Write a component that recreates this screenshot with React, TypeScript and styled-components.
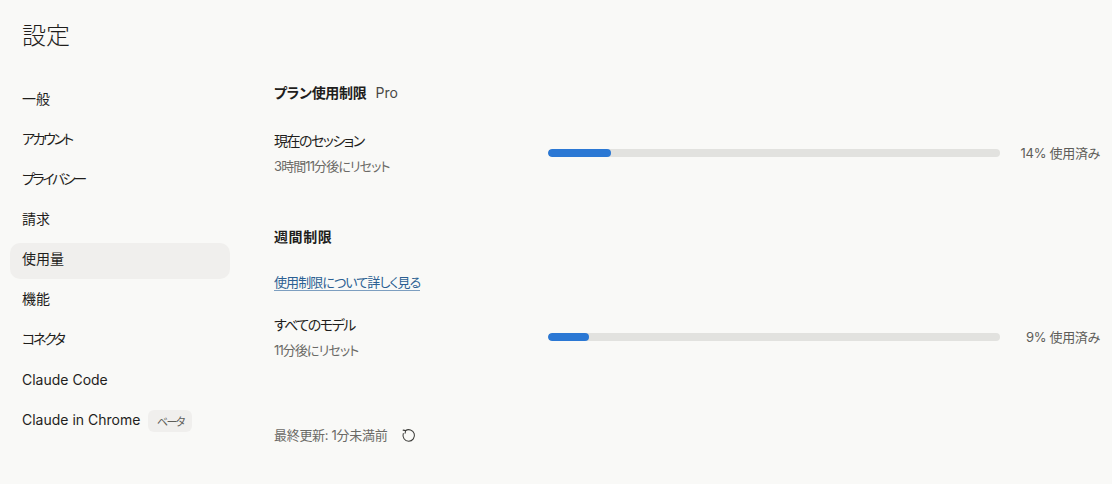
import { createGlobalStyle } from "styled-components";
import styled from "styled-components";

const fontStack = `Inter, "Noto Sans CJK JP", sans-serif`;

const navItems = [
    { label: "一般" },
    { label: "アカウント", kana: true },
    { label: "プライバシー", kana: true },
    { label: "請求" },
    { label: "使用量", active: true },
    { label: "機能" },
    { label: "コネクタ", kana: true },
];

const GlobalStyle = createGlobalStyle`
html, body {
  margin: 0;
  padding: 0;
  background: #f9f9f7;
}
body {
  font-family: ${fontStack};
  font-feature-settings: "palt";
  color: #1f1e1c;
}
`;

export default function App() {
    return (
        <Page>
            <GlobalStyle />
            <Title>設定</Title>
            <Columns>
                <Sidebar>
                    {navItems.map((item) => (
                        <NavItem key={item.label} $active={item.active} $kana={item.kana}>
                            {item.label}
                        </NavItem>
                    ))}
                    <NavItem $latin>Claude Code</NavItem>
                    <NavItem $latin>
                        Claude in Chrome
                        <Badge>ベータ</Badge>
                    </NavItem>
                </Sidebar>
                <Main>
                    <Heading>
                        プラン使用制限
                        <Plan>Pro</Plan>
                    </Heading>
                    <UsageRow $top={27}>
                        <UsageInfo>
                            <UsageName>現在のセッション</UsageName>
                            <UsageReset>3時間11分後にリセット</UsageReset>
                        </UsageInfo>
                        <Track>
                            <Fill style={{ width: "14%" }} />
                        </Track>
                        <UsageValue>14% 使用済み</UsageValue>
                    </UsageRow>
                    <WeeklyHeading>週間制限</WeeklyHeading>
                    <LearnMore href="#">使用制限について詳しく見る</LearnMore>
                    <UsageRow $top={23}>
                        <UsageInfo>
                            <UsageName>すべてのモデル</UsageName>
                            <UsageReset>11分後にリセット</UsageReset>
                        </UsageInfo>
                        <Track>
                            <Fill style={{ width: "9%" }} />
                        </Track>
                        <UsageValue>9% 使用済み</UsageValue>
                    </UsageRow>
                    <Updated>
                        最終更新: 1分未満前
                        <RefreshIcon viewBox="0 0 24 24" fill="none" stroke="currentColor" strokeWidth="1.7" strokeLinecap="round" strokeLinejoin="round">
                            <path d="M7 4.4A9.2 9.2 0 1 1 3.6 9" />
                            <path d="M3.4 3.4L7.4 4.2L6.6 8.4" />
                        </RefreshIcon>
                    </Updated>
                </Main>
            </Columns>
        </Page>
    );
}

const Page = styled.div`
width: 1112px;
height: 484px;
overflow: hidden;
box-sizing: border-box;
padding: 18px 12px 0 10px;
`;

const Title = styled.h1`
margin: 0 0 0 12px;
font-size: 24px;
line-height: 34px;
font-weight: 300;
position: relative;
top: 1px;
`;

const Columns = styled.div`
display: flex;
margin-top: 31px;
`;

const Sidebar = styled.nav`
width: 220px;
flex: none;
display: flex;
flex-direction: column;
gap: 4px;
`;

const NavItem = styled.div<{ $active?: boolean; $kana?: boolean; $latin?: boolean }>`
height: 36px;
box-sizing: border-box;
padding: 0 0 ${(p) => (p.$latin ? 3 : 7)}px 12px;
display: flex;
align-items: center;
border-radius: 10px;
font-size: 14px;
letter-spacing: ${(p) => (p.$kana ? "-2.4px" : "0")};
background: ${(p) => (p.$active ? "#f0efed" : "transparent")};
`;

const Badge = styled.span`
margin-left: 8px;
width: 44px;
height: 22px;
display: inline-flex;
align-items: center;
justify-content: center;
border-radius: 6px;
background: #f0efed;
color: #5e5d59;
font-size: 11px;
letter-spacing: -1.6px;
position: relative;
top: 1px;
`;

const Main = styled.main`
flex: 1;
margin-left: 44px;
`;

const Heading = styled.h2`
margin: 0;
font-size: 14px;
line-height: 20px;
font-weight: 700;
letter-spacing: -0.3px;
display: flex;
align-items: center;
`;

const WeeklyHeading = styled(Heading)`
margin-top: 51px;
letter-spacing: 0.6px;
`;

const Plan = styled.span`
margin-left: 9px;
font-weight: 400;
letter-spacing: 0;
color: #4a4945;
`;

const UsageRow = styled.div<{ $top: number }>`
display: flex;
align-items: center;
margin-top: ${(p) => p.$top}px;
`;

const UsageInfo = styled.div`
width: 274px;
flex: none;
`;

const UsageName = styled.div`
font-size: 14px;
line-height: 20px;
letter-spacing: -1.5px;
padding-top: 1px;
`;

const UsageReset = styled.div`
margin-top: 5px;
font-size: 13px;
line-height: 20px;
letter-spacing: -0.9px;
color: #6b6a66;
`;

const Track = styled.div`
width: 452px;
height: 8px;
flex: none;
border-radius: 4px;
background: #e2e2df;
overflow: hidden;
`;

const Fill = styled.div`
height: 100%;
border-radius: 4px;
background: #2b78d4;
`;

const UsageValue = styled.div`
flex: 1;
padding-bottom: 2px;
text-align: right;
font-size: 13px;
letter-spacing: -0.3px;
color: #5e5d59;
`;

const LearnMore = styled.a`
display: table;
margin-top: 27px;
padding-top: 1px;
font-size: 13px;
line-height: 15px;
letter-spacing: -0.9px;
color: #2b5f92;
text-decoration: none;
border-bottom: 1px solid #7d9fc0;
`;

const Updated = styled.div`
margin-top: 65px;
display: flex;
align-items: center;
font-size: 13px;
line-height: 20px;
letter-spacing: -0.3px;
color: #6b6a66;
`;

const RefreshIcon = styled.svg`
width: 15px;
height: 15px;
margin-left: 14px;
color: #3d3d3a;
`;
